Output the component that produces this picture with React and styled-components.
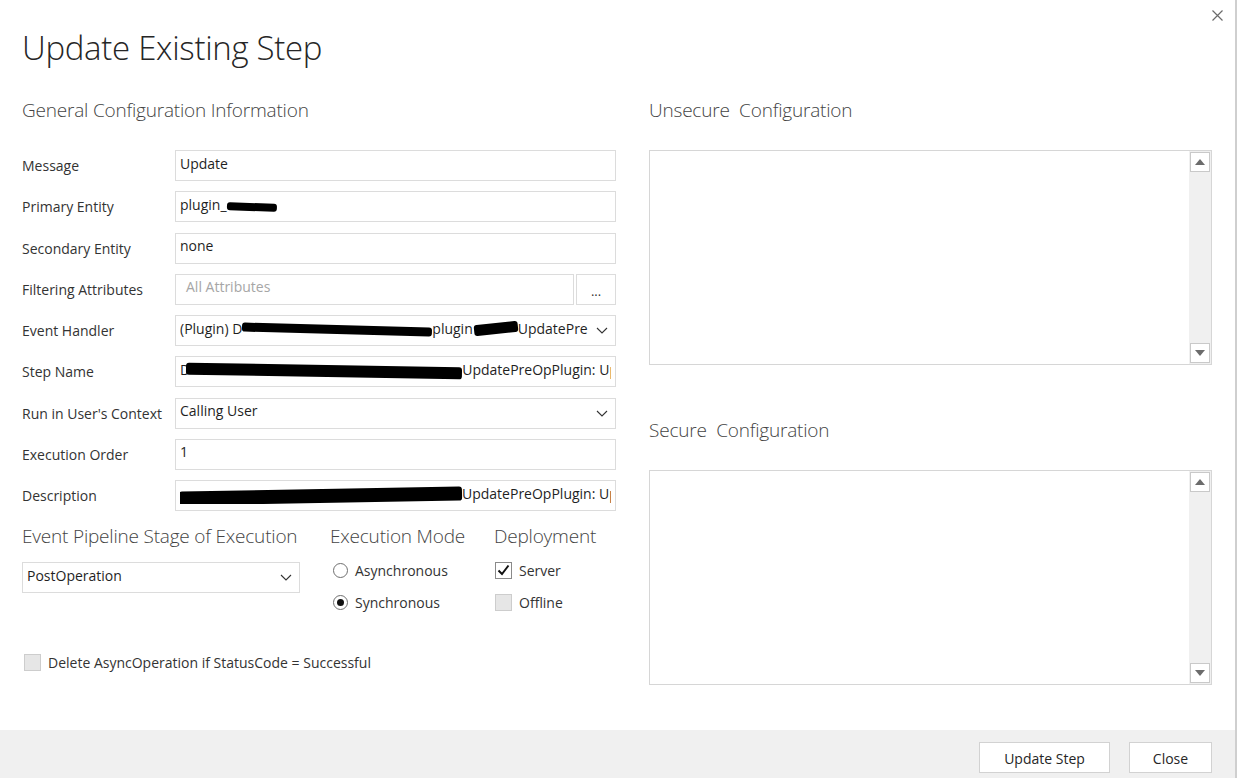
import React from 'react';
import styled, { createGlobalStyle } from 'styled-components';

const GlobalStyle = createGlobalStyle`
    html, body {
        margin: 0;
        padding: 0;
        background: #ffffff;
    }
    body {
        font-family: "Open Sans", "Noto Sans", "Liberation Sans", sans-serif;
        color: #262626;
    }
    * {
        box-sizing: border-box;
    }
`;

const Dialog = styled.div`
    position: relative;
    width: 1237px;
    height: 778px;
    display: flex;
    flex-direction: column;
    background: #ffffff;
    border-right: 2px solid #cfcfcf;
    overflow: hidden;
`;

const CloseButton = styled.button`
    position: absolute;
    top: 7px;
    right: 10px;
    width: 16px;
    height: 16px;
    padding: 0;
    border: none;
    background: transparent;
    display: flex;
    align-items: center;
    justify-content: center;
`;

const Content = styled.div`
    flex: 1;
    padding: 26px 0 0 22px;
`;

const Title = styled.h1`
    margin: 0;
    font-size: 33px;
    line-height: 44px;
    font-weight: 300;
    color: #262626;
    letter-spacing: -0.3px;
`;

const Columns = styled.div`
    display: grid;
    grid-template-columns: 594px 563px;
    column-gap: 33px;
    margin-top: 26px;
`;

const Column = styled.div`
    display: flex;
    flex-direction: column;
`;

const SectionHeading = styled.h2`
    margin: ${(p) => p.$top || 0}px 0 0;
    font-size: 19px;
    line-height: 28px;
    font-weight: 300;
    color: #444;
    white-space: pre;
    letter-spacing: -0.2px;
`;

const FormGrid = styled.div`
    display: grid;
    grid-template-columns: 153px 441px;
    grid-auto-rows: 31px;
    row-gap: 10.25px;
    margin-top: 26px;
    align-items: center;
`;

const Label = styled.span`
    font-size: 14px;
    color: #333;
    white-space: nowrap;
`;

const Field = styled.div`
    height: 31px;
    border: 1px solid #dcdcdc;
    padding: 0 4px;
    display: flex;
    align-items: center;
    font-size: 14px;
    color: ${(p) => (p.$placeholder ? '#a6a6a6' : '#1f1f1f')};
    white-space: nowrap;
    overflow: hidden;
    flex: 1;
    min-width: 0;
`;

const FieldText = styled.span`
    flex: 1;
    display: flex;
    align-items: center;
    overflow: hidden;
    line-height: 20px;
    margin-top: -4px;
    padding-left: ${(p) => p.$indent || 0}px;
`;

const FieldPair = styled.div`
    display: flex;
    gap: 2px;
    height: 31px;
`;

const EllipsisButton = styled.button`
    width: 40px;
    height: 31px;
    border: 1px solid #dcdcdc;
    background: #fff;
    font-family: inherit;
    font-size: 13px;
    color: #333;
    padding: 4px 0 0;
`;

// black marker strokes over hidden parts of names
const Redaction = styled.span`
    display: inline-block;
    flex-shrink: 0;
    width: ${(p) => p.$w}px;
    height: ${(p) => p.$h || 10}px;
    background: #000;
    border-radius: 3px;
    margin: 0 ${(p) => p.$mr || 0}px 0 ${(p) => p.$ml || 0}px;
    transform: rotate(${(p) => p.$rot || 0}deg) translateY(${(p) => p.$dy || 0}px);
`;

const Chevron = () => (
    <svg width="12" height="7" viewBox="0 0 12 7">
        <polyline points="1,1 6,6 11,1" fill="none" stroke="#333" strokeWidth="1.1" />
    </svg>
);

const ChevronSlot = styled.span`
    display: flex;
    align-items: center;
    padding: 0 3px 0 8px;
`;

const OptionsRow = styled.div`
    display: grid;
    grid-template-columns: 308px 164px 122px;
    margin-top: 11px;
`;

const OptionGroup = styled.div`
    display: flex;
    flex-direction: column;
`;

const OptionList = styled.div`
    display: flex;
    flex-direction: column;
    gap: 12px;
    margin-top: 10px;
`;

const StageSelect = styled(Field)`
    width: 278px;
    flex: none;
    margin-top: 12px;
`;

const OptionItem = styled.label`
    display: flex;
    align-items: center;
    gap: 7px;
    height: 20px;
    font-size: 14px;
    color: #333;
    padding-left: ${(p) => p.$indent || 0}px;
`;

const RadioMark = styled.span`
    width: 15px;
    height: 15px;
    border-radius: 50%;
    border: 1px solid #6f6f6f;
    display: flex;
    align-items: center;
    justify-content: center;
    &::after {
        content: '';
        width: 7px;
        height: 7px;
        border-radius: 50%;
        background: ${(p) => (p.$checked ? '#111' : 'transparent')};
    }
`;

const CheckMark = styled.span`
    width: 17px;
    height: 17px;
    border: 1px solid ${(p) => (p.$checked ? '#8a8a8a' : '#cdcdcd')};
    background: ${(p) => (p.$checked ? '#fff' : '#e6e6e6')};
    display: flex;
    align-items: center;
    justify-content: center;
`;

const DeleteRow = styled.div`
    margin-top: 40px;
    padding-left: 2px;
`;

const ConfigBox = styled.div`
    display: flex;
    height: 215px;
    border: 1px solid #d6d6d6;
    margin-top: ${(p) => p.$top || 0}px;
`;

const ConfigText = styled.div`
    flex: 1;
`;

const ScrollTrack = styled.div`
    width: 22px;
    background: #f0f0f0;
    display: flex;
    flex-direction: column;
    justify-content: space-between;
    padding: 1px;
`;

const ScrollArrow = styled.div`
    width: 20px;
    height: 20px;
    background: #fff;
    border: 1px solid #c9c9c9;
    display: flex;
    align-items: center;
    justify-content: center;
`;

const Footer = styled.div`
    height: 48px;
    background: #f0f0f0;
    display: flex;
    justify-content: flex-end;
    align-items: center;
    gap: 19px;
    padding: 0 23px 0 0;
`;

const FooterButton = styled.button`
    height: 31px;
    width: ${(p) => p.$w}px;
    background: #fff;
    border: 1px solid #d2d2d2;
    font-family: inherit;
    font-size: 14px;
    color: #262626;
    margin-top: 6px;
    padding: 2px 0 0;
`;

const Triangle = ({ up }) => (
    <svg width="10" height="6" viewBox="0 0 10 6">
        <polygon points={up ? '5,0 10,6 0,6' : '0,0 10,0 5,6'} fill="#6b6b6b" />
    </svg>
);

const ScrollBox = ({ top }) => (
    <ConfigBox $top={top}>
        <ConfigText />
        <ScrollTrack>
            <ScrollArrow><Triangle up /></ScrollArrow>
            <ScrollArrow><Triangle /></ScrollArrow>
        </ScrollTrack>
    </ConfigBox>
);

const Tick = () => (
    <svg width="13" height="12" viewBox="0 0 13 12">
        <polyline points="1.5,6.5 5,10 11.5,1.5" fill="none" stroke="#111" strokeWidth="2" />
    </svg>
);

export default function App() {
    return (
        <>
            <GlobalStyle />
            <Dialog>
                <CloseButton aria-label="Close">
                    <svg width="11" height="11" viewBox="0 0 11 11">
                        <path d="M0.5 0.5 L10.5 10.5 M10.5 0.5 L0.5 10.5" stroke="#6b6b6b" strokeWidth="1.2" />
                    </svg>
                </CloseButton>
                <Content>
                    <Title>Update Existing Step</Title>
                    <Columns>
                        <Column>
                            <SectionHeading>General Configuration Information</SectionHeading>
                            <FormGrid>
                                <Label>Message</Label>
                                <Field><FieldText>Update</FieldText></Field>

                                <Label>Primary Entity</Label>
                                <Field>
                                    <FieldText>
                                        plugin_
                                        <Redaction $w={50} $h={8} $dy={2} $rot={2} />
                                    </FieldText>
                                </Field>

                                <Label>Secondary Entity</Label>
                                <Field><FieldText>none</FieldText></Field>

                                <Label>Filtering Attributes</Label>
                                <FieldPair>
                                    <Field $placeholder><FieldText $indent={6}>All Attributes</FieldText></Field>
                                    <EllipsisButton>...</EllipsisButton>
                                </FieldPair>

                                <Label>Event Handler</Label>
                                <Field>
                                    <FieldText>
                                        (Plugin) D
                                        <Redaction $w={190} $h={9} $rot={1.5} $dy={1} />
                                        plugin
                                        <Redaction $w={44} $h={11} $rot={-6} $ml={1} />
                                        UpdatePre
                                    </FieldText>
                                    <ChevronSlot><Chevron /></ChevronSlot>
                                </Field>

                                <Label>Step Name</Label>
                                <Field>
                                    <FieldText>
                                        D
                                        <Redaction $w={276} $h={12} $rot={1} $dy={1} $ml={-4} />
                                        UpdatePreOpPlugin: Up
                                    </FieldText>
                                </Field>

                                <Label>Run in User's Context</Label>
                                <Field>
                                    <FieldText>Calling User</FieldText>
                                    <ChevronSlot><Chevron /></ChevronSlot>
                                </Field>

                                <Label>Execution Order</Label>
                                <Field><FieldText>1</FieldText></Field>

                                <Label>Description</Label>
                                <Field>
                                    <FieldText>
                                        <Redaction $w={283} $h={14} $rot={-1} $dy={2} $ml={-1} />
                                        UpdatePreOpPlugin: Up
                                    </FieldText>
                                </Field>
                            </FormGrid>

                            <OptionsRow>
                                <OptionGroup>
                                    <SectionHeading>Event Pipeline Stage of Execution</SectionHeading>
                                    <StageSelect>
                                        <FieldText>PostOperation</FieldText>
                                        <ChevronSlot><Chevron /></ChevronSlot>
                                    </StageSelect>
                                </OptionGroup>
                                <OptionGroup>
                                    <SectionHeading>Execution Mode</SectionHeading>
                                    <OptionList>
                                        <OptionItem $indent={3}><RadioMark />Asynchronous</OptionItem>
                                        <OptionItem $indent={3}><RadioMark $checked />Synchronous</OptionItem>
                                    </OptionList>
                                </OptionGroup>
                                <OptionGroup>
                                    <SectionHeading>Deployment</SectionHeading>
                                    <OptionList>
                                        <OptionItem $indent={1}><CheckMark $checked><Tick /></CheckMark>Server</OptionItem>
                                        <OptionItem $indent={1}><CheckMark />Offline</OptionItem>
                                    </OptionList>
                                </OptionGroup>
                            </OptionsRow>

                            <DeleteRow>
                                <OptionItem><CheckMark />Delete AsyncOperation if StatusCode = Successful</OptionItem>
                            </DeleteRow>
                        </Column>

                        <Column>
                            <SectionHeading>Unsecure  Configuration</SectionHeading>
                            <ScrollBox top={26} />
                            <SectionHeading $top={51}>Secure  Configuration</SectionHeading>
                            <ScrollBox top={26} />
                        </Column>
                    </Columns>
                </Content>
                <Footer>
                    <FooterButton $w={131}>Update Step</FooterButton>
                    <FooterButton $w={83}>Close</FooterButton>
                </Footer>
            </Dialog>
        </>
    );
}
